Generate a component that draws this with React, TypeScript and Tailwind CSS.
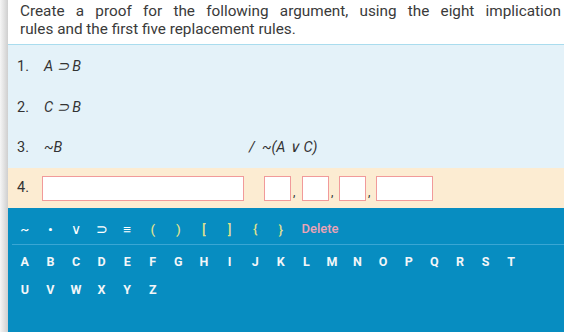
import React from "react";

const symbols: { s: string; c: string }[] = [
  { s: "~", c: "text-white" },
  { s: "•", c: "text-white" },
  { s: "∨", c: "text-white" },
  { s: "⊃", c: "text-white" },
  { s: "≡", c: "text-white" },
  { s: "(", c: "text-[#dfe08f]" },
  { s: ")", c: "text-[#dfe08f]" },
  { s: "[", c: "text-[#dfe08f]" },
  { s: "]", c: "text-[#dfe08f]" },
  { s: "{", c: "text-[#dfe08f]" },
  { s: "}", c: "text-[#dfe08f]" },
];

const letters = "ABCDEFGHIJKLMNOPQRSTUVWXYZ".split("");

export default function App() {
  return (
    <div
      className="flex w-[564px] h-[332px] overflow-hidden bg-white text-[#333]"
      style={{ fontFamily: "Roboto, 'Liberation Sans', sans-serif" }}
    >
      <div className="w-[8px] shrink-0 bg-gradient-to-r from-[#f6f6f6] to-[#cfcfcf]" />
      <div className="flex-1 flex flex-col">
        <div className="h-[45px] border-b border-[#a9dcee] pl-[12px] pr-[3px] pt-[2px] text-[15.3px] leading-[18px] text-[#3a3a3a]">
          <div className="text-justify [text-align-last:justify]">
            Create a proof for the following argument, using the eight implication
          </div>
          <div>rules and the first five replacement rules.</div>
        </div>
        <div className="bg-[#e4f2f9] flex flex-col pt-[1px]">
          <div className="h-[41px] flex items-center pl-[9px] text-[14.5px]">
            <span className="w-[27px]">1.</span>
            <span className="italic">A ⊃ B</span>
          </div>
          <div className="h-[41px] flex items-center pl-[9px] text-[14.5px]">
            <span className="w-[27px]">2.</span>
            <span className="italic">C ⊃ B</span>
          </div>
          <div className="h-[40px] flex items-center pl-[9px] text-[14.5px]">
            <span className="w-[27px]">3.</span>
            <span className="italic w-[205px]">~B</span>
            <span className="italic">/&nbsp; ~(A ∨ C)</span>
          </div>
        </div>
        <div className="h-[40px] bg-[#fcecd2] flex items-center pl-[9px] text-[14.5px]">
          <span className="w-[25px]">4.</span>
          <div className="w-[202px] h-[25px] bg-white border-[1.5px] border-[#f19a9a]" />
          <div className="w-[20px]" />
          <div className="w-[27px] h-[25px] bg-white border-[1.5px] border-[#f19a9a]" />
          <span className="w-[11px] text-[12px] leading-none pl-[2px] pt-[8px]">,</span>
          <div className="w-[27px] h-[25px] bg-white border-[1.5px] border-[#f19a9a]" />
          <span className="w-[10px] text-[12px] leading-none pl-[2px] pt-[8px]">,</span>
          <div className="w-[27px] h-[25px] bg-white border-[1.5px] border-[#f19a9a]" />
          <span className="w-[10px] text-[12px] leading-none pl-[2px] pt-[8px]">,</span>
          <div className="w-[57px] h-[25px] bg-white border-[1.5px] border-[#f19a9a]" />
        </div>
        <div className="flex-1 bg-[#078dc1] flex flex-col">
          <div className="ml-[4px] h-[37px] border-b border-[#3aa6d4] flex items-center pt-[6px]">
            {symbols.map((k, i) => (
              <span
                key={i}
                className={`w-[25.6px] text-center text-[13.5px] font-medium ${k.c}`}
              >
                {k.s}
              </span>
            ))}
            <span className="pl-[8px] text-[13px] font-medium text-[#eba3b6]">Delete</span>
          </div>
          <div className="pl-[4px] pr-[30px] pt-[3px] flex flex-wrap">
            {letters.map((l) => (
              <span
                key={l}
                className="w-[25.6px] h-[28px] flex items-center justify-center text-[12.5px] font-bold text-[#f2f6f8]"
              >
                {l}
              </span>
            ))}
          </div>
        </div>
      </div>
    </div>
  );
}
